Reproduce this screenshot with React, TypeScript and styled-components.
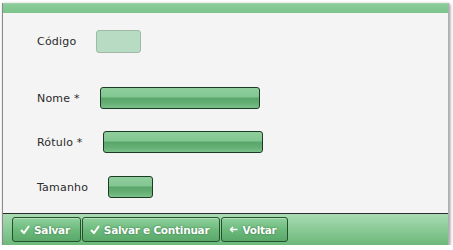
import React from "react";
import styled, { createGlobalStyle } from "styled-components";

const Global = createGlobalStyle`
  html, body { margin: 0; padding: 0; background: #ffffff; }
  body { font-family: "DejaVu Sans", Verdana, sans-serif; }
`;

const Panel = styled.div`
  width: 447px;
  height: 242px;
  margin: 3px 0 0 2px;
  display: flex;
  flex-direction: column;
  border-left: 1px solid #8a8a8a;
  border-right: 1px solid #b0b0b0;
  box-shadow: 1px 1px 3px rgba(0, 0, 0, 0.45);
  box-sizing: border-box;
`;

const TopBar = styled.div`
  height: 9px;
  background: linear-gradient(#8ccd9a, #7cc38d);
  border-top: 1px solid #9fd2a8;
`;

const Body = styled.div`
  flex: 1;
  background: #f4f4f4;
  padding-top: 17px;
`;

const Row = styled.div<{ $top: number }>`
  display: flex;
  align-items: center;
  padding-left: 34px;
  margin-top: ${(p) => p.$top}px;
  height: 22px;
`;

const Label = styled.span`
  font-size: 11px;
  color: #2a2a2a;
  margin-right: 20px;
  letter-spacing: 0.2px;
`;

const CodeBox = styled.div`
  width: 43px;
  height: 21px;
  border: 1px solid #9fb9a6;
  border-radius: 3px;
  background: #b8dcc3;
`;

const Field = styled.div<{ $w: number }>`
  width: ${(p) => p.$w}px;
  height: 20px;
  border: 1px solid #1d3a22;
  border-radius: 3px;
  background: linear-gradient(
    #8fcf9d 0%,
    #82c692 45%,
    #5aa66a 50%,
    #64ae73 75%,
    #7ac18a 100%
  );
`;

const Footer = styled.div`
  height: 31px;
  border-top: 1px solid #2b2b2b;
  background: linear-gradient(#a9dbb2, #6cb97b);
  display: flex;
  align-items: center;
  gap: 1px;
  padding-left: 9px;
`;

const Button = styled.div`
  height: 23px;
  display: flex;
  align-items: center;
  gap: 4px;
  padding: 0 10px 0 7px;
  border: 1px solid #24502b;
  border-radius: 3px;
  box-shadow: inset 0 1px 0 rgba(255, 255, 255, 0.35);
  background: linear-gradient(#8fd09c, #6ab87a 55%, #5aa96b);
  color: #ffffff;
  font-weight: bold;
  font-size: 10.5px;
  letter-spacing: -0.25px;
  text-shadow: 0 0 2px rgba(20, 60, 25, 0.6);
`;

const Check = () => (
  <svg width="10" height="9" viewBox="0 0 10 9">
    <path d="M1 5 L4 8 L9 1" stroke="#ffffff" strokeWidth="2" fill="none" />
  </svg>
);

const Arrow = () => (
  <svg width="9" height="7" viewBox="0 0 9 7">
    <path d="M8.5 3.5 H2 M4 1 L1.5 3.5 L4 6" stroke="#ffffff" strokeWidth="1.4" fill="none" />
  </svg>
);

export default function App() {
  return (
    <>
      <Global />
      <Panel>
        <TopBar />
        <Body>
          <Row $top={0}>
            <Label>Código</Label>
            <CodeBox />
          </Row>
          <Row $top={35}>
            <Label>Nome *</Label>
            <Field $w={158} />
          </Row>
          <Row $top={22}>
            <Label>Rótulo *</Label>
            <Field $w={158} />
          </Row>
          <Row $top={23}>
            <Label>Tamanho</Label>
            <Field $w={43} />
          </Row>
        </Body>
        <Footer>
          <Button>
            <Check />
            Salvar
          </Button>
          <Button>
            <Check />
            Salvar e Continuar
          </Button>
          <Button>
            <Arrow />
            Voltar
          </Button>
        </Footer>
      </Panel>
    </>
  );
}
